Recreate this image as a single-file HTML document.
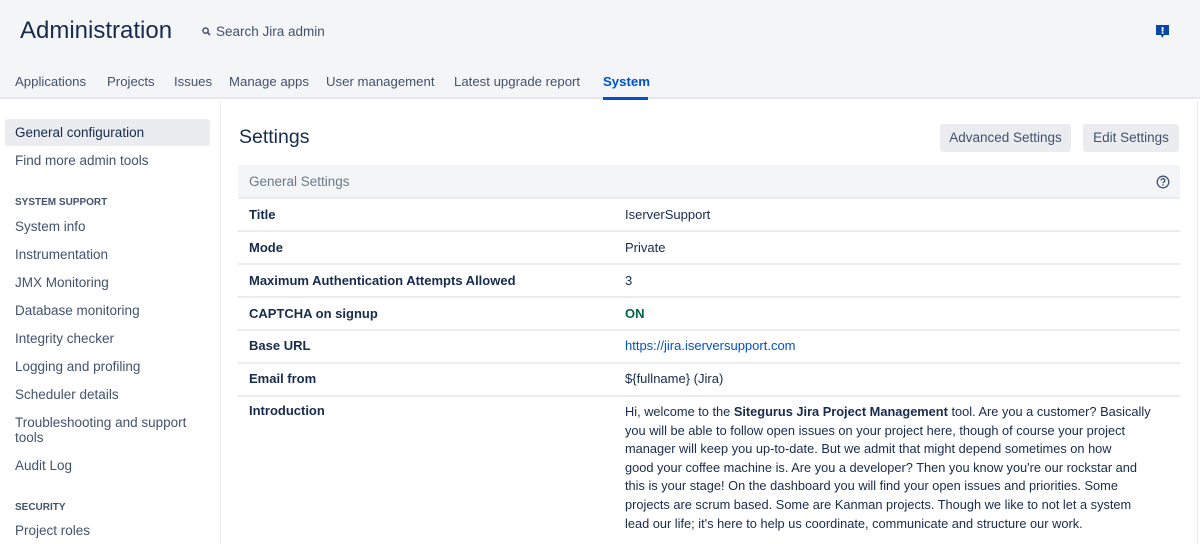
<!DOCTYPE html>
<html><head><style>
*{margin:0;padding:0;box-sizing:border-box}
body{width:1200px;height:544px;overflow:hidden;background:#fff;font-family:"Liberation Sans",sans-serif;color:#172b4d;position:relative}
.a{position:absolute;white-space:nowrap}
#hdr{position:absolute;left:0;top:0;width:1200px;height:99px;background:#f4f5f7;border-bottom:2px solid #e5e7eb}
.nav{font-size:13.2px;color:#42526e;top:74px}
.side{font-size:13.5px;color:#42526e;left:15px}
.sh{font-size:10px;font-weight:bold;color:#42526e;left:15px}
.row{position:absolute;left:238px;width:942px;border-bottom:2px solid #ebecf0}
.k{font-size:13px;font-weight:bold;left:249px}
.v{font-size:13px;left:625px;color:#172b4d}
.btn{position:absolute;top:124px;height:28px;background:#ebecf0;border-radius:3px;font-size:13.5px;color:#42526e;text-align:center;line-height:28px}
</style></head><body>
<div id="hdr"></div>
<div class="a" style="left:20px;top:17px;font-size:24px;color:#172b4d">Administration</div>
<svg class="a" style="left:202px;top:27px" width="9" height="9" viewBox="0 0 9 9"><circle cx="3.6" cy="3.6" r="2.6" fill="none" stroke="#42526e" stroke-width="1.5"/><path d="M5.5 5.5L8 8" stroke="#42526e" stroke-width="1.6"/></svg>
<div class="a" style="left:216px;top:24px;font-size:13.5px;color:#42526e">Search Jira admin</div>
<svg class="a" style="left:1155px;top:24px" width="15" height="16" viewBox="0 0 15 16"><path d="M1 1h13v10H9l-2 3-1-3H1z" fill="#0747a6"/><rect x="6.7" y="3" width="1.8" height="4.5" fill="#fff"/><rect x="6.7" y="8.3" width="1.8" height="1.6" fill="#fff"/></svg>
<div class="a nav" style="left:15px">Applications</div>
<div class="a nav" style="left:107px">Projects</div>
<div class="a nav" style="left:174px">Issues</div>
<div class="a nav" style="left:229px">Manage apps</div>
<div class="a nav" style="left:326px">User management</div>
<div class="a nav" style="left:454px">Latest upgrade report</div>
<div class="a nav" style="left:603px;color:#0052cc;font-weight:bold">System</div>
<div class="a" style="left:603px;top:97px;width:45px;height:3px;background:#0052cc"></div>
<div class="a" style="left:220px;top:101px;width:1px;height:443px;background:#ebecf0"></div>
<div class="a" style="left:1197px;top:101px;width:1px;height:443px;background:#ebecf0"></div>
<div class="a" style="left:5px;top:119px;width:205px;height:27px;background:#ebecf0;border-radius:3px"></div>
<div class="a side" style="top:125px;color:#172b4d">General configuration</div>
<div class="a side" style="top:153px">Find more admin tools</div>
<div class="a sh" style="top:197px">SYSTEM SUPPORT</div>
<div class="a side" style="top:219px">System info</div>
<div class="a side" style="top:247px">Instrumentation</div>
<div class="a side" style="top:275px">JMX Monitoring</div>
<div class="a side" style="top:303px">Database monitoring</div>
<div class="a side" style="top:331px">Integrity checker</div>
<div class="a side" style="top:359px">Logging and profiling</div>
<div class="a side" style="top:387px">Scheduler details</div>
<div class="a side" style="top:415px;line-height:15px">Troubleshooting and support<br>tools</div>
<div class="a side" style="top:458px">Audit Log</div>
<div class="a sh" style="top:502px">SECURITY</div>
<div class="a side" style="top:523px">Project roles</div>
<div class="a" style="left:239px;top:126px;font-size:19.5px;color:#172b4d">Settings</div>
<div class="btn" style="left:940px;width:131px">Advanced Settings</div>
<div class="btn" style="left:1083px;width:96px">Edit Settings</div>
<div class="row" style="top:165px;height:34px;background:#f4f5f7"></div>
<div class="a" style="left:249px;top:174px;font-size:13.5px;color:#6b778c">General Settings</div>
<svg class="a" style="left:1156px;top:175px" width="14" height="14" viewBox="0 0 14 14"><circle cx="7" cy="7" r="5.8" fill="none" stroke="#42526e" stroke-width="1.3"/><path d="M5.2 5.6a1.8 1.8 0 1 1 2.6 1.5c-.6.3-.8.6-.8 1.2" fill="none" stroke="#42526e" stroke-width="1.3"/><circle cx="7" cy="10" r=".8" fill="#42526e"/></svg>
<div class="row" style="top:199px;height:33px"></div>
<div class="row" style="top:232px;height:33px"></div>
<div class="row" style="top:265px;height:33px"></div>
<div class="row" style="top:298px;height:33px"></div>
<div class="row" style="top:331px;height:33px"></div>
<div class="row" style="top:364px;height:33px"></div>
<div class="a k" style="top:207px">Title</div><div class="a v" style="top:207px">IserverSupport</div>
<div class="a k" style="top:240px">Mode</div><div class="a v" style="top:240px">Private</div>
<div class="a k" style="top:273px">Maximum Authentication Attempts Allowed</div><div class="a v" style="top:273px">3</div>
<div class="a k" style="top:306px">CAPTCHA on signup</div><div class="a v" style="top:306px;color:#006644;font-weight:bold">ON</div>
<div class="a k" style="top:338px">Base URL</div><div class="a v" style="top:338px;color:#0052cc">https://jira.iserversupport.com</div>
<div class="a k" style="top:371px">Email from</div><div class="a v" style="top:371px">${fullname} (Jira)</div>
<div class="a k" style="top:403px">Introduction</div>
<div class="a v" style="top:403px;line-height:18.6px;font-size:12.8px">Hi, welcome to the <b>Sitegurus Jira Project Management</b> tool. Are you a customer? Basically<br>you will be able to follow open issues on your project here, though of course your project<br>manager will keep you up-to-date. But we admit that might depend sometimes on how<br>good your coffee machine is. Are you a developer? Then you know you're our rockstar and<br>this is your stage! On the dashboard you will find your open issues and priorities. Some<br>projects are scrum based. Some are Kanman projects. Though we like to not let a system<br>lead our life; it's here to help us coordinate, communicate and structure our work.</div>
</body></html>
